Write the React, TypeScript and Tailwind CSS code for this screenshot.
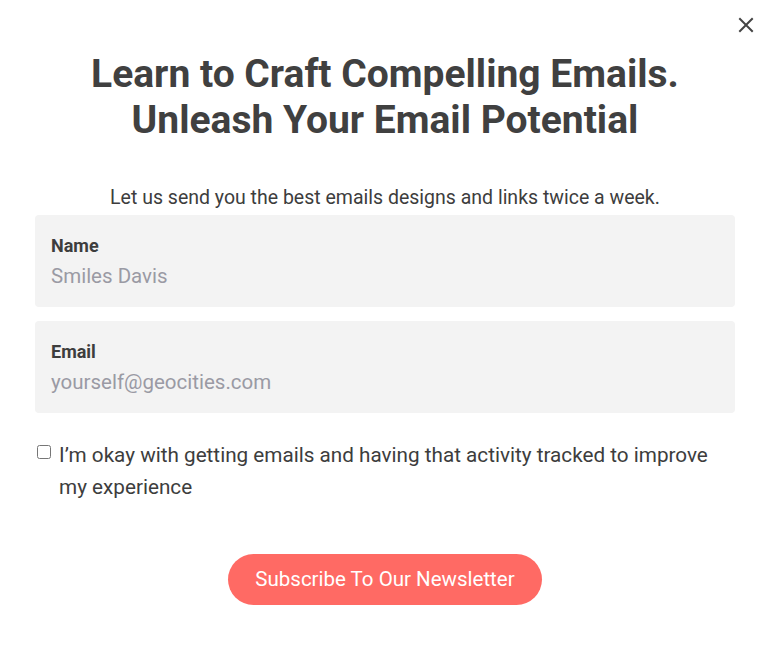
import React from 'react';

export default function App() {
  return (
    <div className="relative min-h-[663px] bg-white pl-[35px] pr-[33px] text-[#3d3d3d]" style={{ fontFamily: 'Roboto, "Liberation Sans", sans-serif' }}>
      {/* Close */}
      <button className="absolute right-[12px] top-[15px] p-[2px] text-[#444]" aria-label="Close">
        <svg width="16" height="16" viewBox="0 0 16 16" fill="none" stroke="currentColor" strokeWidth="2" strokeLinecap="square">
          <path d="M2 2L14 14M14 2L2 14" />
        </svg>
      </button>

      <h1 className="pt-[51px] text-center text-[39px] font-bold leading-[46px] text-[#404040]">
        Learn to Craft Compelling Emails.
        <br />
        Unleash Your Email Potential
      </h1>

      <p className="mt-[41px] text-center text-[19.5px] leading-[28px] text-[#3d3d3d]">
        Let us send you the best emails designs and links twice a week.
      </p>

      <form className="mt-[3px] flex flex-col">
        <label className="flex h-[92px] flex-col rounded-[4px] bg-[#f3f3f3] px-4 pt-[19px]">
          <span className="text-[18px] font-bold leading-[24px] text-[#3d3d3d]">Name</span>
          <input
            className="mt-[4px] bg-transparent text-[20.5px] leading-[28px] text-[#3d3d3d] outline-none placeholder:text-[#9a9aa4]"
            placeholder="Smiles Davis"
          />
        </label>
        <label className="mt-[14px] flex h-[92px] flex-col rounded-[4px] bg-[#f3f3f3] px-4 pt-[19px]">
          <span className="text-[18px] font-bold leading-[24px] text-[#3d3d3d]">Email</span>
          <input
            className="mt-[4px] bg-transparent text-[20.5px] leading-[28px] text-[#3d3d3d] outline-none placeholder:text-[#9a9aa4]"
            placeholder="yourself@geocities.com"
          />
        </label>

        <label className="mt-[26px] flex items-start gap-[8px] pl-[2px] text-[20.7px] leading-[32px] text-[#3d3d3d]">
          <input type="checkbox" className="mt-[6px] h-[14px] w-[14px] shrink-0" />
          <span>I’m okay with getting emails and having that activity tracked to improve my experience</span>
        </label>

        <div className="mt-[51px] flex justify-center">
          <button
            type="button"
            className="h-[51px] w-[314px] rounded-full bg-[#ff6a64] text-[20.5px] text-white"
          >
            Subscribe To Our Newsletter
          </button>
        </div>
      </form>
    </div>
  );
}
